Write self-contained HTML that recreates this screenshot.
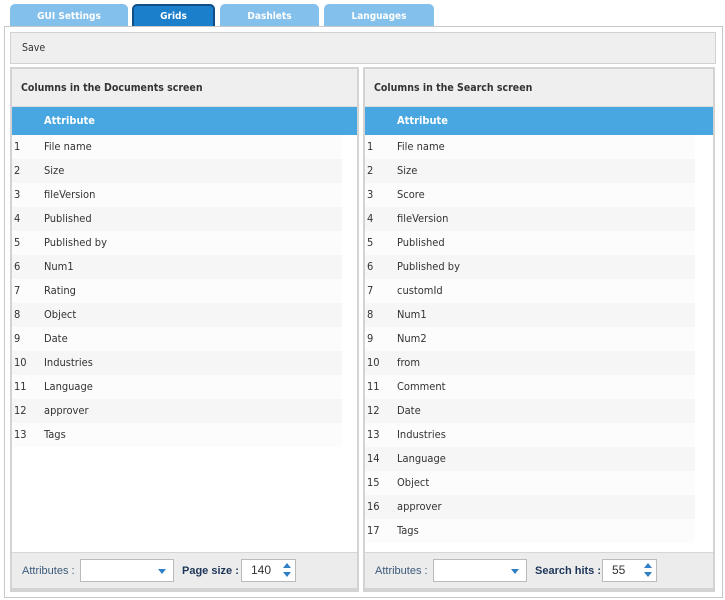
<!DOCTYPE html>
<html><head><style>
*{box-sizing:border-box;margin:0;padding:0}
body{width:725px;height:600px;background:#fff;font-family:"DejaVu Sans Condensed","DejaVu Sans","Liberation Sans",sans-serif;font-size:11px;color:#333;position:relative;overflow:hidden}
.tab{position:absolute;top:4px;height:23px;background:#84c0ec;border-radius:5px 5px 0 0;color:#fff;font-weight:bold;font-size:10px;text-align:center;line-height:25px}
.tab.act{background:#1b7fcc;border:2px solid #0d4f86;border-bottom:none;line-height:21px}
.outer{position:absolute;left:4px;top:26px;width:719px;height:572px;border:1px solid #c8c8c8;background:#fff}
.save{position:absolute;left:10px;top:32px;width:706px;height:32px;background:#efefef;border:1px solid #d2d2d2;line-height:30px;padding-left:11px;font-size:10.5px}
.panel{position:absolute;top:67px;height:525px;border:2px solid #d3d3d3;border-bottom:4px solid #d3d3d3;background:#fff}
.ph{height:38px;background:#efefef;border-bottom:1px solid #ddd;font-weight:bold;font-size:10.5px;line-height:38px;padding-left:9px;color:#333}
.gh{height:28px;background:#48a6e1;color:#fff;font-weight:bold;font-size:11px;line-height:28px;padding-left:32px}
.row{height:24px;line-height:24px;font-size:11px;position:relative}
.row span{position:absolute;left:2px}
.row b{font-weight:normal;position:absolute;left:32px}
.row.s{background:#f6f6f6}
.row.w{background:#fcfcfc}
.foot{position:absolute;left:0;right:0;bottom:0;height:36px;background:#ececec;border-top:1px solid #d6d6d6;font-family:"Liberation Sans Narrow","Liberation Sans",sans-serif;font-size:11px}
.lab{position:absolute;top:12px;color:#3a5a7a}
.sel{position:absolute;top:6px;width:94px;height:23px;background:#fff;border:1px solid #bbb}
.sel:after{content:"";position:absolute;right:7px;top:9px;border:4px solid transparent;border-top:5px solid #2f7fc4}
.bl{position:absolute;top:12px;font-weight:bold;color:#1d3557}
.spin{position:absolute;top:6px;width:55px;height:23px;background:#fff;border:1px solid #bbb;font-size:12px;line-height:21px;padding-left:9px;color:#333}
.spin:before{content:"";position:absolute;right:4px;top:3px;border:4px solid transparent;border-bottom:5px solid #2f7fc4;border-top:none}
.spin:after{content:"";position:absolute;right:4px;top:12px;border:4px solid transparent;border-top:5px solid #2f7fc4;border-bottom:none}
</style></head><body>
<div class="tab" style="left:10px;width:118px">GUI Settings</div>
<div class="tab act" style="left:132px;width:83px">Grids</div>
<div class="tab" style="left:220px;width:99px">Dashlets</div>
<div class="tab" style="left:324px;width:110px">Languages</div>
<div class="outer"></div>
<div class="save">Save</div>

<div class="panel" style="left:10px;width:349px">
<div class="ph">Columns in the Documents screen</div>
<div class="gh">Attribute</div>
<div style="width:330px">
<div class="row w"><span>1</span><b>File name</b></div>
<div class="row s"><span>2</span><b>Size</b></div>
<div class="row w"><span>3</span><b>fileVersion</b></div>
<div class="row s"><span>4</span><b>Published</b></div>
<div class="row w"><span>5</span><b>Published by</b></div>
<div class="row s"><span>6</span><b>Num1</b></div>
<div class="row w"><span>7</span><b>Rating</b></div>
<div class="row s"><span>8</span><b>Object</b></div>
<div class="row w"><span>9</span><b>Date</b></div>
<div class="row s"><span>10</span><b>Industries</b></div>
<div class="row w"><span>11</span><b>Language</b></div>
<div class="row s"><span>12</span><b>approver</b></div>
<div class="row w"><span>13</span><b>Tags</b></div>
</div>
<div class="foot">
<div class="lab" style="left:10px">Attributes :</div>
<div class="sel" style="left:68px"></div>
<div class="bl" style="left:170px">Page size :</div>
<div class="spin" style="left:229px">140</div>
</div>
</div>

<div class="panel" style="left:363px;width:352px">
<div class="ph">Columns in the Search screen</div>
<div class="gh">Attribute</div>
<div style="width:330px">
<div class="row w"><span>1</span><b>File name</b></div>
<div class="row s"><span>2</span><b>Size</b></div>
<div class="row w"><span>3</span><b>Score</b></div>
<div class="row s"><span>4</span><b>fileVersion</b></div>
<div class="row w"><span>5</span><b>Published</b></div>
<div class="row s"><span>6</span><b>Published by</b></div>
<div class="row w"><span>7</span><b>customId</b></div>
<div class="row s"><span>8</span><b>Num1</b></div>
<div class="row w"><span>9</span><b>Num2</b></div>
<div class="row s"><span>10</span><b>from</b></div>
<div class="row w"><span>11</span><b>Comment</b></div>
<div class="row s"><span>12</span><b>Date</b></div>
<div class="row w"><span>13</span><b>Industries</b></div>
<div class="row s"><span>14</span><b>Language</b></div>
<div class="row w"><span>15</span><b>Object</b></div>
<div class="row s"><span>16</span><b>approver</b></div>
<div class="row w"><span>17</span><b>Tags</b></div>
</div>
<div class="foot">
<div class="lab" style="left:10px">Attributes :</div>
<div class="sel" style="left:68px"></div>
<div class="bl" style="left:170px">Search hits :</div>
<div class="spin" style="left:237px">55</div>
</div>
</div>
</body></html>
